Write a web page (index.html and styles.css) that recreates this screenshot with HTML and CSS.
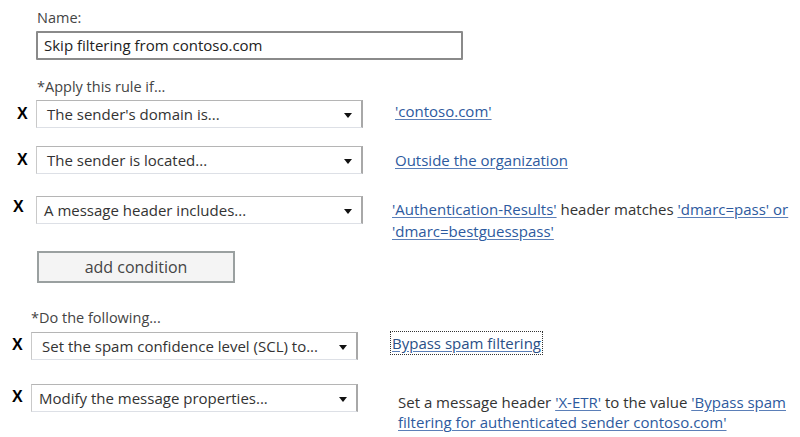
FILE: index.html
```html
<!DOCTYPE html>
<html>
<head>
<meta charset="utf-8">
<link rel="stylesheet" href="styles.css">
</head>
<body>
<div class="page">
  <div class="name-block">
    <div class="label">Name:</div>
    <div class="textbox">Skip filtering from contoso.com</div>
  </div>

  <div class="section cond">
    <div class="label">*Apply this rule if...</div>
    <div class="row r1">
      <span class="del">X</span>
      <div class="select"><span class="opt">The sender's domain is...</span><span class="caret"></span></div>
      <div class="value"><a class="lnk">'contoso.com'</a></div>
    </div>
    <div class="row r2">
      <span class="del">X</span>
      <div class="select"><span class="opt">The sender is located...</span><span class="caret"></span></div>
      <div class="value"><a class="lnk">Outside the organization</a></div>
    </div>
    <div class="row r3">
      <span class="del">X</span>
      <div class="select tight"><span class="opt">A message header includes...</span><span class="caret"></span></div>
      <div class="value multi"><a class="lnk">'Authentication-Results'</a> header matches <a class="lnk">'dmarc=pass' or<br>'dmarc=bestguesspass'</a></div>
    </div>
    <button class="add-btn">add condition</button>
  </div>

  <div class="section act">
    <div class="label">*Do the following...</div>
    <div class="row r4">
      <span class="del">X</span>
      <div class="select"><span class="opt">Set the spam confidence level (SCL) to...</span><span class="caret"></span></div>
      <div class="value"><a class="lnk focus">Bypass spam filtering</a></div>
    </div>
    <div class="row r5">
      <span class="del">X</span>
      <div class="select tight"><span class="opt">Modify the message properties...</span><span class="caret"></span></div>
      <div class="value multi">Set a message header <a class="lnk">'X-ETR'</a> to the value <a class="lnk">'Bypass spam<br>filtering for authenticated sender contoso.com'</a></div>
    </div>
  </div>
</div>
</body>
</html>
```

FILE: styles.css
```css
html, body {
  margin: 0;
  padding: 0;
  background: #ffffff;
}
body {
  font-family: "Open Sans", "Noto Sans", "DejaVu Sans", sans-serif;
  font-size: 14px;
  color: #333333;
}
.page {
  padding-top: 8px;
  padding-bottom: 0;
}
.label {
  color: #444444;
  line-height: 20px;
  height: 20px;
  font-size: 14.5px;
}
.name-block {
  padding-left: 37px;
}
.name-block .label {
  margin-bottom: 3px;
}
.textbox {
  box-sizing: border-box;
  width: 427px;
  height: 29px;
  margin-left: -1px;
  border: 2px solid #8a8a8a;
  border-radius: 1px;
  padding: 0 0 0 6px;
  line-height: 25px;
  font-size: 15px;
  color: #222222;
}
.section.cond {
  margin-top: 17px;
}
.cond .label {
  padding-left: 37px;
  margin-bottom: 3px;
}
.row {
  display: grid;
  grid-template-columns: 36px 327px 1fr;
  column-gap: 0;
  align-items: start;
}
.act .row {
  grid-template-columns: 31px 327px 1fr;
}
.r2 { margin-top: 18px; }
.r3 { margin-top: 22px; }
.r5 { margin-top: 24px; }
.del {
  font-family: "Liberation Sans", Arial, sans-serif;
  font-weight: bold;
  font-size: 16px;
  color: #000000;
  line-height: 28px;
  padding-left: 17px;
}
.r3 .del { padding-left: 13px; line-height: 22px; }
.act .del { padding-left: 12px; line-height: 26px; }
.select {
  box-sizing: border-box;
  height: 28px;
  display: flex;
  align-items: center;
  justify-content: space-between;
  border: 1px solid #c9c9c9;
  border-top-color: #b5b5b5;
  border-right: 2px solid #a8a8a8;
  border-bottom-color: #dde0e6;
  padding: 0 9px 0 10px;
  font-size: 15px;
  color: #333333;
  background: #ffffff;
}
.select.tight {
  padding-left: 7px;
}
.caret {
  width: 0;
  height: 0;
  border-left: 4.5px solid transparent;
  border-right: 4.5px solid transparent;
  border-top: 5px solid #111111;
  margin-top: 2px;
}
.value {
  margin-left: 32px;
  font-size: 15px;
  line-height: 20px;
  color: #333333;
  white-space: nowrap;
}
.r1 .value { padding-top: 1px; }
.r2 .value { padding-top: 4px; }
.r3 .value { padding-top: 2px; line-height: 22px; margin-left: 29px; margin-bottom: -18px; }
.r4 .value { padding-top: 1px; margin-left: 34px; }
.r5 .value { padding-top: 8px; margin-left: 40px; }
.lnk {
  color: #2d5a9e;
  text-decoration: underline;
  text-decoration-color: #5b7fb8;
  text-underline-offset: 2px;
}
.lnk.focus {
  outline: 1px dotted #333333;
  outline-offset: 1px;
  color: #2a4f86;
}
.add-btn {
  display: block;
  box-sizing: border-box;
  margin: 27px 0 0 37px;
  width: 198px;
  height: 32px;
  border: 2px solid #9aa0a0;
  background: #f4f4f4;
  font-family: inherit;
  font-size: 16px;
  color: #444444;
  padding: 0;
}
.section.act {
  margin-top: 25px;
}
.act .label {
  padding-left: 31px;
  margin-bottom: 4px;
}
```
